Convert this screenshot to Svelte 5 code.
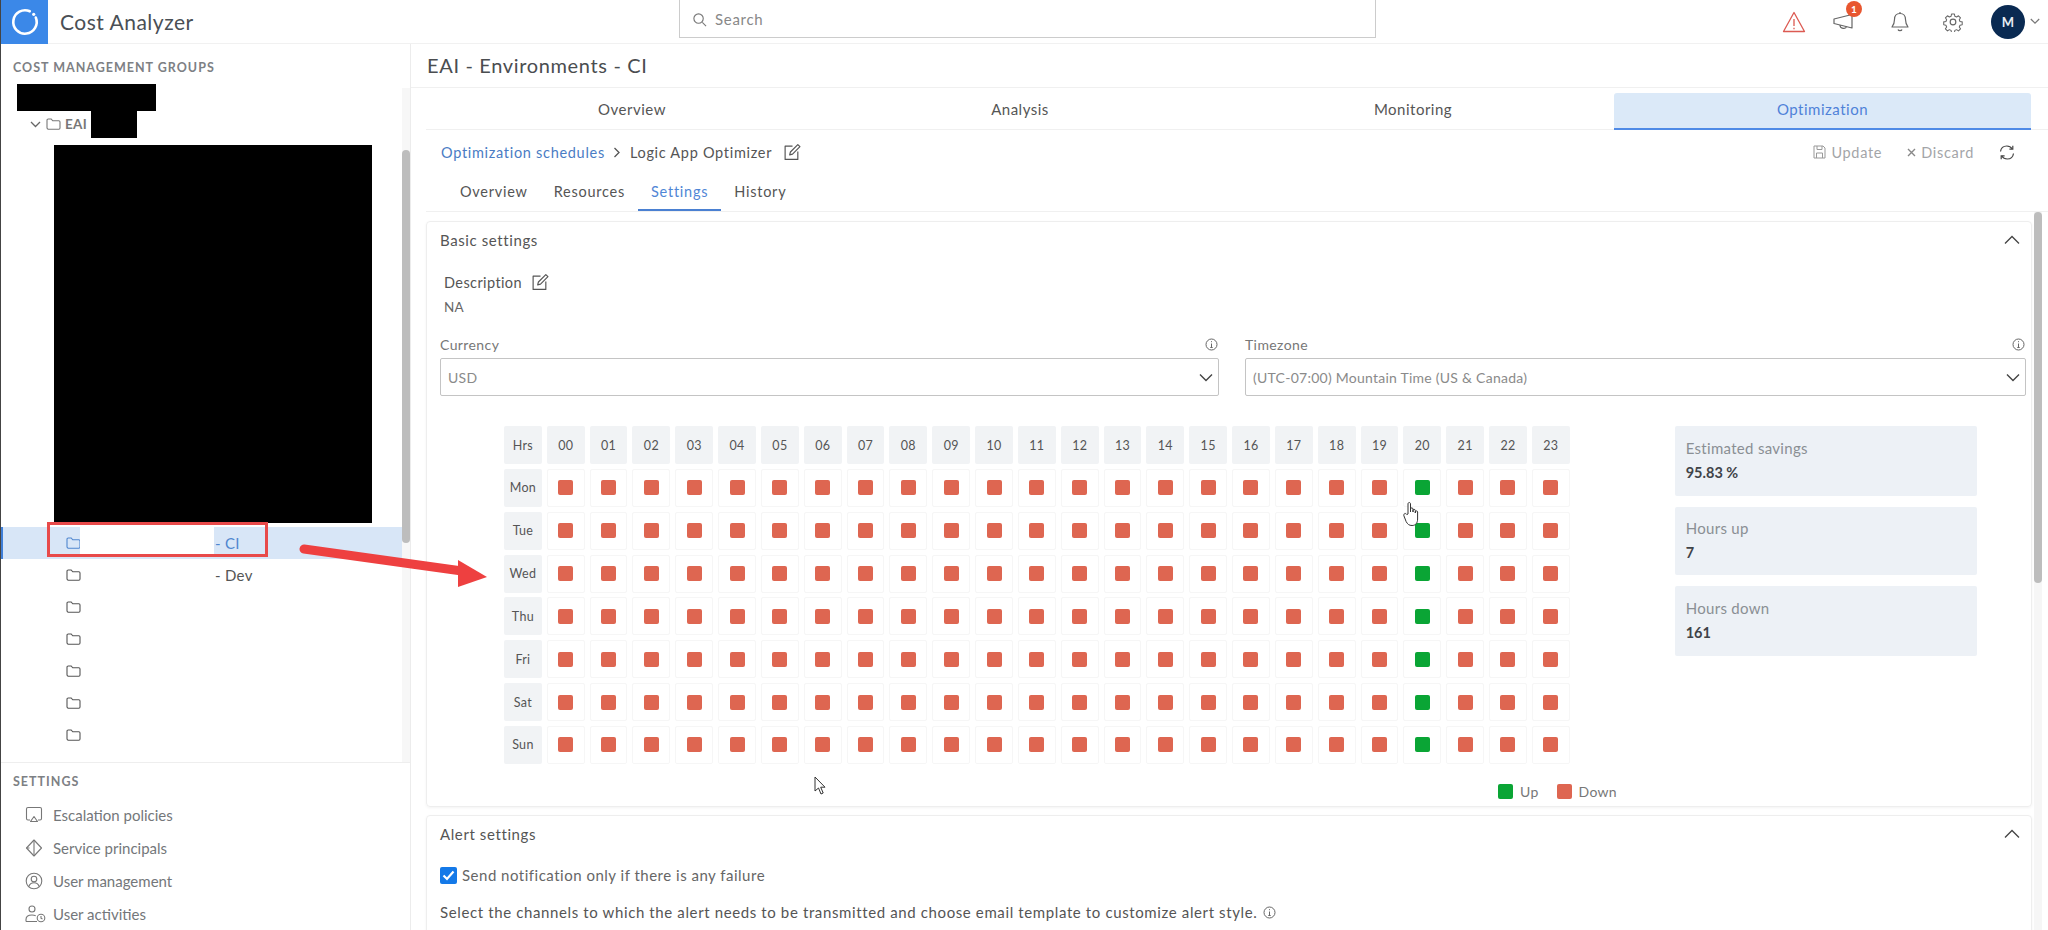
<script>
	const topTabs = ['Overview', 'Analysis', 'Monitoring', 'Optimization']
	const subTabs = ['Overview', 'Resources', 'Settings', 'History']
	const days = ['Mon', 'Tue', 'Wed', 'Thu', 'Fri', 'Sat', 'Sun']
	const hours = Array.from({ length: 24 }, (_, i) => String(i).padStart(2, '0'))
	const stats = [
		{ label: 'Estimated savings', value: '95.83 %', cls: 'first' },
		{ label: 'Hours up', value: '7', cls: 'second' },
		{ label: 'Hours down', value: '161', cls: 'third' }
	]
	const folders = ['- Dev', '', '', '', '', '']
</script>

<div class="app">
	<header class="topbar">
		<div class="logo">
			<svg width="30" height="30" viewBox="0 0 30 30" fill="none">
				<path d="M25.800 10.500A11.700 11.700 0 1 1 19.800 4.300" stroke="#fff" stroke-width="2.600" stroke-linecap="round" />
				<circle cx="23.700" cy="7.300" r="1.600" fill="#fff" />
			</svg>
		</div>
		<div class="product">Cost Analyzer</div>
		<div class="search">
			<svg width="15" height="15" viewBox="0 0 16 16" fill="none" stroke="#777" stroke-width="1.200">
				<circle cx="7" cy="7" r="5" />
				<path d="M11 11l4 4" />
			</svg>
			<span>Search</span>
		</div>
		<div class="actions">
			<svg class="warn" width="24" height="22" viewBox="0 0 24 22" fill="none" stroke="#dc5a52" stroke-width="1.300" stroke-linejoin="round">
				<path d="M12 1.500L22.500 20.500H1.500z" />
				<path d="M12 8v7M12 16.800v1.400" />
			</svg>
			<div class="megaphone">
				<svg width="24" height="18" viewBox="0 0 24 18" fill="none" stroke="#666" stroke-width="1.200" stroke-linejoin="round">
					<path d="M2 6l18-4.500v13.500L2 10.500z" />
					<path d="M8 12c0 4 6 4.500 6.500 1.500" />
				</svg>
				<span class="badge">1</span>
			</div>
			<svg class="bell" width="18" height="22" viewBox="0 0 18 22" fill="none" stroke="#666" stroke-width="1.200" stroke-linejoin="round">
				<path d="M9 2.500c-3.500 0-5.500 2.500-5.500 6 0 4-1 5.500-2.500 7.500h16c-1.500-2-2.500-3.500-2.500-7.500 0-3.500-2-6-5.500-6z" />
				<path d="M7 18.500c.5 1.600 3.500 1.600 4 0M9 1v1.500" />
			</svg>
			<svg class="gear" width="20" height="20" viewBox="0 0 24 24" fill="none" stroke="#666" stroke-width="1.400" stroke-linejoin="round">
				<circle cx="12" cy="12" r="3.400" />
				<path d="M10 1.500h4l.6 3 2.300 1 2.600-1.700 2.800 2.800-1.700 2.600 1 2.300 3 .6v4l-3 .6-1 2.300 1.700 2.600-2.800 2.800-2.600-1.700-2.300 1-.6 3h-4l-.6-3-2.300-1-2.600 1.700-2.800-2.800 1.700-2.600-1-2.300-3-.6v-4l3-.6 1-2.300-1.700-2.600 2.800-2.800 2.600 1.700 2.300-1z" transform="translate(1.400 1.200) scale(.88)" />
			</svg>
			<div class="avatar">M</div>
			<svg class="caret" width="10" height="7" viewBox="0 0 10 7" fill="none" stroke="#777" stroke-width="1.200"><path d="M.8 1l4.200 4.200L9.200 1" /></svg>
		</div>
	</header>

	<div class="body">
		<aside class="sidebar">
			<div class="group-title">COST MANAGEMENT GROUPS</div>
			<div class="tree-wrap">
				<div class="tree">
					<div class="tree-row eai">
						<svg width="11" height="7" viewBox="0 0 11 7" fill="none" stroke="#666" stroke-width="1.300"><path d="M1 1l4.500 4.500L10 1" /></svg>
						<svg class="folder" width="15" height="12" viewBox="0 0 15 12" fill="none" stroke="#777" stroke-width="1.100"><path d="M1 2.200c0-.7.500-1.200 1.200-1.200h3l1.500 1.800h6.100c.7 0 1.200.500 1.200 1.200v6.100c0 .7-.5 1.200-1.200 1.200H2.200C1.500 11 1 10.500 1 9.800z" /></svg>
						<span>EAI</span>
					</div>
					<div class="hidden-rows"></div>
					<div class="tree-row folder-row selected">
						<svg class="folder" width="15" height="12" viewBox="0 0 15 12" fill="none" stroke="#4f86cf" stroke-width="1.100"><path d="M1 2.200c0-.7.500-1.200 1.200-1.200h3l1.500 1.800h6.100c.7 0 1.200.500 1.200 1.200v6.100c0 .7-.5 1.200-1.200 1.200H2.200C1.500 11 1 10.500 1 9.800z" /></svg>
						<span>- CI</span>
					</div>
					{#each folders as name}
						<div class="tree-row folder-row">
							<svg class="folder" width="15" height="12" viewBox="0 0 15 12" fill="none" stroke="#555" stroke-width="1.100"><path d="M1 2.200c0-.7.500-1.200 1.200-1.200h3l1.500 1.800h6.100c.7 0 1.200.500 1.200 1.200v6.100c0 .7-.5 1.200-1.200 1.200H2.200C1.500 11 1 10.500 1 9.800z" /></svg>
							<span>{name}</span>
						</div>
					{/each}
				</div>
				<div class="side-scroll"><div class="side-thumb"></div></div>
			</div>
			<div class="settings">
				<div class="group-title small">SETTINGS</div>
				<ul>
					<li>
						<svg width="18" height="18" viewBox="0 0 18 18" fill="none" stroke="#777" stroke-width="1.100" stroke-linejoin="round"><path d="M5 14H3c-1 0-1.500-.5-1.500-1.500V3C1.500 2 2 1.500 3 1.500h12c1 0 1.500.5 1.500 1.500v9.500c0 1-.5 1.500-1.500 1.500h-2" /><path d="M9 10.500l3.500 5h-7z" /></svg>
						<span>Escalation policies</span>
					</li>
					<li>
						<svg width="18" height="18" viewBox="0 0 18 18" fill="none" stroke="#777" stroke-width="1.100" stroke-linejoin="round"><path d="M9 1l7.500 8L9 17 1.500 9z" /><path d="M9 1v16M1.500 9h3" /></svg>
						<span>Service principals</span>
					</li>
					<li>
						<svg width="18" height="18" viewBox="0 0 18 18" fill="none" stroke="#777" stroke-width="1.100"><circle cx="9" cy="9" r="7.800" /><circle cx="9" cy="7" r="2.800" /><path d="M3.800 14.500c1-2.800 3-3.800 5.200-3.800s4.200 1 5.200 3.800" /></svg>
						<span>User management</span>
					</li>
					<li class="tight">
						<svg width="21" height="18" viewBox="0 0 21 18" fill="none" stroke="#777" stroke-width="1.100"><circle cx="7" cy="4" r="3" /><path d="M1 16.500v-2c0-3 2.500-4.500 6-4.500 1.500 0 2.800.3 3.800.9M1 16.500h11" /><circle cx="16" cy="13" r="3.800" /><path d="M16 11v2.200l1.500 .8" /></svg>
						<span>User activities</span>
					</li>
				</ul>
			</div>
		</aside>

		<main class="main">
			<h1>EAI - Environments - CI</h1>
			<nav class="top-tabs">
				{#each topTabs as tab, i}
					<div class="top-tab" class:active={i === 3}>{tab}</div>
				{/each}
			</nav>
			<div class="crumbs">
				<span class="link">Optimization schedules</span>
				<svg width="8" height="11" viewBox="0 0 8 11" fill="none" stroke="#555" stroke-width="1.300"><path d="M1.500 1l4.500 4.500L1.500 10" /></svg>
				<span class="current">Logic App Optimizer</span>
				<svg class="edit" width="18" height="18" viewBox="0 0 17 17" fill="none" stroke="#555" stroke-width="1.100" stroke-linejoin="round"><path d="M9 3H2v12.500h12V8" /><path d="M7 8.500l-.7 2.700 2.700-.7 7-7-2-2z" /></svg>
				<div class="crumb-actions">
					<span class="act">
						<svg width="13" height="14" viewBox="0 0 13 14" fill="none" stroke="#999" stroke-width="1"><path d="M1 1h9l2 2v10H1z" /><path d="M4 1v3.500h5V1M3.500 13V8h6v5" /></svg>
						Update
					</span>
					<span class="act">
						<svg width="9" height="9" viewBox="0 0 9 9" fill="none" stroke="#888" stroke-width="1.400"><path d="M1 1l7 7M8 1l-7 7" /></svg>
						Discard
					</span>
					<svg class="refresh" width="16" height="15" viewBox="0 0 16 15" fill="none" stroke="#444" stroke-width="1.200"><path d="M1.500 6.500C2 3 4.500 1 7.800 1c2.400 0 4.200 1 5.400 2.800M14.500 8.500C14 12 11.500 14 8.200 14c-2.400 0-4.200-1-5.400-2.800" /><path d="M13.800 .8v3.400h-3.400M2.200 14.200v-3.400h3.400" /></svg>
				</div>
			</div>
			<nav class="sub-tabs">
				{#each subTabs as tab, i}
					<div class="sub-tab" class:active={i === 2}>{tab}</div>
				{/each}
			</nav>

			<div class="scroll-area">
				<div class="cards">
					<section class="card basic">
						<div class="card-head">
							<span>Basic settings</span>
							<svg width="16" height="10" viewBox="0 0 16 10" fill="none" stroke="#444" stroke-width="1.300"><path d="M1 8.500l7-7 7 7" /></svg>
						</div>
						<div class="desc">
							<div class="desc-title">
								<span>Description</span>
								<svg width="18" height="18" viewBox="0 0 17 17" fill="none" stroke="#555" stroke-width="1.100" stroke-linejoin="round"><path d="M9 3H2v12.500h12V8" /><path d="M7 8.500l-.7 2.700 2.700-.7 7-7-2-2z" /></svg>
							</div>
							<div class="desc-value">NA</div>
						</div>
						<div class="fields">
							<div class="field">
								<div class="field-label">
									<span>Currency</span>
									<svg width="13" height="13" viewBox="0 0 13 13" fill="none" stroke="#666" stroke-width="1"><circle cx="6.500" cy="6.500" r="5.500" /><path d="M6.500 5.500v4M5.300 9.500h2.400M6.500 3.200v1" /></svg>
								</div>
								<div class="select">
									<span>USD</span>
									<svg width="14" height="9" viewBox="0 0 14 9" fill="none" stroke="#444" stroke-width="1.400"><path d="M1 1.500l6 6 6-6" /></svg>
								</div>
							</div>
							<div class="field">
								<div class="field-label">
									<span>Timezone</span>
									<svg width="13" height="13" viewBox="0 0 13 13" fill="none" stroke="#666" stroke-width="1"><circle cx="6.500" cy="6.500" r="5.500" /><path d="M6.500 5.500v4M5.300 9.500h2.400M6.500 3.200v1" /></svg>
								</div>
								<div class="select">
									<span>(UTC-07:00) Mountain Time (US &amp; Canada)</span>
									<svg width="14" height="9" viewBox="0 0 14 9" fill="none" stroke="#444" stroke-width="1.400"><path d="M1 1.500l6 6 6-6" /></svg>
								</div>
							</div>
						</div>
						<div class="schedule">
							<div class="grid">
								<div class="head-cell">Hrs</div>
								{#each hours as h}
									<div class="head-cell">{h}</div>
								{/each}
								{#each days as day}
									<div class="head-cell day">{day}</div>
									{#each hours as h}
										<div class="slot"><span class="mark" class:up={h === '20'}></span></div>
									{/each}
								{/each}
							</div>
							<div class="stats">
								{#each stats as s}
									<div class="stat {s.cls}">
										<div class="stat-label">{s.label}</div>
										<div class="stat-value">{s.value}</div>
									</div>
								{/each}
							</div>
						</div>
						<div class="legend">
							<span class="mark up big"></span><span class="legend-text">Up</span>
							<span class="mark big"></span><span class="legend-text">Down</span>
						</div>
					</section>

					<section class="card alert">
						<div class="card-head">
							<span>Alert settings</span>
							<svg width="16" height="10" viewBox="0 0 16 10" fill="none" stroke="#444" stroke-width="1.300"><path d="M1 8.500l7-7 7 7" /></svg>
						</div>
						<label class="check">
							<span class="box">
								<svg width="13" height="11" viewBox="0 0 13 11" fill="none" stroke="#fff" stroke-width="2.200"><path d="M1.500 5.500l3.500 3.500L11.500 1.500" /></svg>
							</span>
							Send notification only if there is any failure
						</label>
						<p class="channels">
							Select the channels to which the alert needs to be transmitted and choose email template to customize alert style.
							<svg width="13" height="13" viewBox="0 0 13 13" fill="none" stroke="#666" stroke-width="1"><circle cx="6.500" cy="6.500" r="5.500" /><path d="M6.500 5.500v4M5.300 9.500h2.400M6.500 3.200v1" /></svg>
						</p>
					</section>
				</div>
				<div class="main-scroll"><div class="main-thumb"></div></div>
			</div>
		</main>
	</div>

	<!-- redactions and annotations painted over the capture -->
	<div class="redact r1"></div>
	<div class="redact r2"></div>
	<div class="redact r3"></div>
	<div class="wipe"></div>
	<div class="callout"></div>
	<svg class="arrow" width="200" height="50" viewBox="0 0 200 50">
		<path d="M7 5L165 27" stroke="#ee4040" stroke-width="9" stroke-linecap="round" fill="none" />
		<path d="M161 16L190 33 161 43z" fill="#ee4040" />
	</svg>
	<svg class="hand" width="18" height="26" viewBox="0 0 18 26" fill="#fff" stroke="#333" stroke-width="1" stroke-linejoin="round">
		<path d="M5 13V3c0-2 2.500-2 2.500 0v8V8c0-1.500 2.500-1.500 2.500 0v3-1.500c0-1.500 2.300-1.500 2.300 0V12v-1c0-1.500 2.300-1.500 2.300 0v7c0 4-2 6.500-5.500 6.500-3 0-4.500-1.200-6-4L1 15c-1-2 1.500-3.500 2.800-1.500z" />
	</svg>
	<svg class="pointer" width="12" height="19" viewBox="0 0 12 19" fill="#fff" stroke="#333" stroke-width="1" stroke-linejoin="round">
		<path d="M1 1v14l3.500-3 2.500 6 2.200-1-2.500-5.800H11z" />
	</svg>
</div>

<style>
	:global(body) {
		margin: 0;
		overflow: hidden;
		background: #fff;
	}

	.app {
		position: relative;
		width: 2048px;
		height: 930px;
		overflow: hidden;
		box-sizing: border-box;
		border-left: 1px solid #444;
		font-family: Lato, 'Open Sans', sans-serif;
		color: #555;
		background: #fff;
	}

	.topbar {
		display: flex;
		align-items: center;
		height: 44px;
		border-bottom: 1px solid #f1f1f1;
		box-sizing: border-box;
	}

	.logo {
		width: 47px;
		height: 44px;
		background: #3b88e8;
		display: flex;
		align-items: center;
		justify-content: center;
		flex: none;
	}

	.product {
		margin-left: 12px;
		font-size: 21px;
		letter-spacing: 0.5px;
		color: #4a4f55;
		width: 619px;
		flex: none;
	}

	.search {
		width: 697px;
		height: 38px;
		margin-top: -6px;
		padding: 2px 0 0 12px;
		box-sizing: border-box;
		border: 1px solid #ccc;
		border-top: none;
		display: flex;
		align-items: center;
		gap: 8px;
		font-size: 15px;
		letter-spacing: 0.7px;
		color: #888;
		flex: none;
	}

	.actions {
		flex: 1;
		min-width: 0;
		display: flex;
		align-items: center;
		padding-left: 406px;
		height: 44px;
	}

	.warn,
	.bell,
	.gear,
	.caret {
		flex: none;
	}

	.megaphone {
		position: relative;
		margin-left: 26px;
		height: 18px;
		flex: none;
	}

	.badge {
		position: absolute;
		top: -12px;
		left: 14px;
		width: 16px;
		height: 16px;
		border-radius: 50%;
		background: #e8562f;
		color: #fff;
		font-size: 10px;
		font-weight: 700;
		text-align: center;
		line-height: 16px;
	}

	.bell {
		margin-left: 35px;
	}

	.gear {
		margin-left: 34px;
	}

	.avatar {
		margin-left: 28px;
		margin-right: 5px;
		width: 34px;
		height: 34px;
		border-radius: 50%;
		background: #0a2a52;
		color: #e8edf3;
		font-size: 13px;
		font-weight: 700;
		text-align: center;
		line-height: 34px;
		flex: none;
	}

	.body {
		display: flex;
		height: 886px;
	}

	.sidebar {
		width: 410px;
		flex: none;
		box-sizing: border-box;
		border-right: 1px solid #ececec;
		display: flex;
		flex-direction: column;
	}

	.group-title {
		height: 44px;
		box-sizing: border-box;
		padding: 16px 0 0 12px;
		font-size: 12.500px;
		font-weight: 700;
		letter-spacing: 1px;
		color: #7d8084;
		flex: none;
	}

	.group-title.small {
		height: auto;
		padding-top: 11px;
	}

	.tree-wrap {
		flex: 1;
		display: flex;
		min-height: 0;
	}

	.tree {
		flex: 1;
		padding-top: 20px;
		overflow: hidden;
	}

	.tree-row {
		display: flex;
		align-items: center;
		height: 32px;
		font-size: 15px;
		letter-spacing: 0.3px;
		color: #555;
	}

	.eai {
		padding-left: 29px;
		font-weight: 700;
		font-size: 13.500px;
		color: #777;
	}

	.eai .folder {
		margin: 0 4px 0 5px;
	}

	.hidden-rows {
		height: 387px;
	}

	.folder-row {
		padding-left: 65px;
	}

	.folder-row span {
		margin-left: 134px;
	}

	.folder-row.selected {
		background: #d8e6f7;
		color: #4f86cf;
		box-shadow: inset 2px 0 0 #3f7fd8;
	}

	.side-scroll {
		width: 8px;
		background: #f7f7f7;
		flex: none;
	}

	.side-thumb {
		margin-top: 62px;
		height: 393px;
		background: #bdbdbd;
		border-radius: 4px;
	}

	.settings {
		height: 168px;
		flex: none;
		border-top: 1px solid #eee;
		box-sizing: border-box;
	}

	.settings ul {
		list-style: none;
		margin: 9px 0 0;
		padding: 0 0 0 24px;
	}

	.settings li {
		display: flex;
		align-items: center;
		gap: 10px;
		height: 33px;
		font-size: 15px;
		color: #74777a;
	}

	.settings li.tight {
		gap: 7px;
	}

	.main {
		flex: 1;
		min-width: 0;
		display: flex;
		flex-direction: column;
	}

	h1 {
		margin: 0;
		height: 44px;
		box-sizing: border-box;
		padding: 9px 0 0 16px;
		font-size: 20px;
		font-weight: 400;
		letter-spacing: 0.65px;
		color: #4a4d50;
		border-bottom: 1px solid #f0f0f0;
		flex: none;
	}

	.top-tabs {
		display: grid;
		grid-template-columns: 412px 364px 412px 417px;
		margin-left: 15px;
		height: 42px;
		box-sizing: border-box;
		padding-top: 5px;
		border-bottom: 1px solid #f0f0f0;
		flex: none;
	}

	.top-tab {
		text-align: center;
		font-size: 15px;
		letter-spacing: 0.5px;
		line-height: 33px;
		color: #555;
		border-bottom: 2px solid transparent;
		margin-bottom: -1px;
	}

	.top-tab:nth-child(3) {
		padding-left: 10px;
	}

	.top-tab.active {
		background: #dbe9f8;
		color: #4f82d8;
		border-bottom-color: #4f8ae6;
		border-radius: 3px 3px 0 0;
	}

	.crumbs {
		display: flex;
		align-items: center;
		height: 42px;
		box-sizing: border-box;
		padding: 2px 0 0 30px;
		font-size: 14.500px;
		letter-spacing: 0.7px;
		flex: none;
	}

	.link {
		color: #4a7cc4;
	}

	.crumbs > svg {
		margin: 0 9px 0 8px;
	}

	.crumbs > .edit {
		margin: 0 0 0 11px;
	}

	.current {
		color: #555;
	}

	.crumb-actions {
		margin-left: auto;
		margin-right: 33px;
		display: flex;
		align-items: center;
		gap: 25px;
		color: #a3a5a8;
	}

	.act {
		display: flex;
		align-items: center;
		gap: 5px;
	}

	.sub-tabs {
		display: flex;
		height: 40px;
		margin-left: 15px;
		padding-left: 21px;
		box-sizing: border-box;
		border-bottom: 1px solid #f0f0f0;
		flex: none;
	}

	.sub-tab {
		padding: 0 13px;
		font-size: 14.500px;
		letter-spacing: 0.75px;
		line-height: 39px;
		color: #555;
		height: 39px;
		box-sizing: border-box;
		border-bottom: 2px solid transparent;
	}

	.sub-tab.active {
		color: #4f86d6;
		border-bottom-color: #4a80d2;
	}

	.scroll-area {
		flex: 1;
		min-height: 0;
		display: flex;
	}

	.cards {
		width: 1606px;
		margin-left: 15px;
		padding-top: 9px;
		flex: none;
	}

	.main-scroll {
		width: 8px;
		margin-left: 2px;
		background: #f6f6f6;
	}

	.main-thumb {
		height: 371px;
		background: #bdbdbd;
		border-radius: 4px;
	}

	.card {
		border: 1px solid #eeeeee;
		border-radius: 4px;
		box-sizing: border-box;
		box-shadow: 0 1px 3px rgba(0, 0, 0, 0.05);
		padding: 0 6px 0 13px;
	}

	.basic {
		height: 586px;
	}

	.alert {
		margin-top: 8px;
		height: 130px;
	}

	.card-head {
		display: flex;
		align-items: center;
		justify-content: space-between;
		height: 38px;
		box-sizing: border-box;
		padding: 0 5px 2px 0;
		font-size: 15px;
		letter-spacing: 0.6px;
		color: #555;
	}

	.desc {
		padding: 12px 0 0 4px;
	}

	.desc-title {
		display: flex;
		align-items: center;
		gap: 9px;
		height: 20px;
		font-size: 14.500px;
		letter-spacing: 0.4px;
	}

	.desc-value {
		margin-top: 6px;
		font-size: 13.500px;
		line-height: 18px;
		letter-spacing: 0.3px;
		color: #666;
	}

	.fields {
		display: grid;
		grid-template-columns: 779px 781px;
		column-gap: 26px;
		margin-top: 17px;
	}

	.field-label {
		display: flex;
		align-items: center;
		justify-content: space-between;
		height: 24px;
		box-sizing: border-box;
		margin-bottom: 1px;
		padding: 0 1px 2px 0;
		font-size: 14px;
		letter-spacing: 0.4px;
		color: #777;
	}

	.select {
		display: flex;
		align-items: center;
		justify-content: space-between;
		height: 38px;
		box-sizing: border-box;
		border: 1px solid #c4c4c4;
		border-radius: 2px;
		padding: 0 5px 0 7px;
		font-size: 14px;
		letter-spacing: 0.25px;
		color: #8a8a8a;
	}

	.schedule {
		display: flex;
		margin-top: 30px;
		padding-left: 64px;
	}

	.grid {
		display: grid;
		grid-template-columns: repeat(25, 37.830px);
		grid-auto-rows: 38px;
		column-gap: 5px;
		row-gap: 4.850px;
		flex: none;
	}

	.head-cell {
		background: #f1f3f5;
		border-radius: 2px;
		display: flex;
		align-items: center;
		justify-content: center;
		font-size: 12.500px;
		letter-spacing: 0.3px;
		color: #555;
	}

	.slot {
		border: 1px solid #f6f6f6;
		border-radius: 2px;
		box-sizing: border-box;
		display: flex;
		align-items: center;
		justify-content: center;
	}

	.mark {
		display: block;
		width: 15px;
		height: 15px;
		border-radius: 2px;
		background: #de6651;
	}

	.mark.up {
		background: #0aa535;
	}

	.mark.big {
		flex: none;
	}

	.stats {
		margin-left: 105px;
		width: 302px;
		flex: none;
	}

	.stat {
		background: #edf1f6;
		box-sizing: border-box;
		border-radius: 2px;
		padding: 13px 0 0 11px;
		margin-bottom: 11px;
		height: 70px;
	}

	.stat.second {
		height: 68px;
		padding-top: 12px;
	}

	.stat-label {
		font-size: 15px;
		letter-spacing: 0.3px;
		line-height: 18px;
		color: #8a8f94;
	}

	.stat-value {
		margin-top: 7px;
		font-size: 14.500px;
		line-height: 18px;
		font-weight: 700;
		color: #3f4348;
	}

	.legend {
		display: flex;
		align-items: center;
		margin: 19px 0 0 1058px;
		font-size: 14px;
		letter-spacing: 0.3px;
		color: #777;
	}

	.legend-text {
		margin: 0 18px 0 7px;
	}

	.check {
		display: flex;
		align-items: center;
		gap: 5px;
		margin-top: 12px;
		font-size: 15px;
		letter-spacing: 0.5px;
		color: #666;
	}

	.box {
		width: 17px;
		height: 17px;
		background: #1479e8;
		border-radius: 2px;
		display: flex;
		align-items: center;
		justify-content: center;
		flex: none;
	}

	.channels {
		margin: 19px 0 0;
		display: flex;
		align-items: center;
		gap: 6px;
		font-size: 15px;
		letter-spacing: 0.62px;
		color: #555;
	}

	.redact {
		position: absolute;
		background: #000;
	}

	.r1 {
		left: 16px;
		top: 84px;
		width: 139px;
		height: 27px;
	}

	.r2 {
		left: 90px;
		top: 110px;
		width: 46px;
		height: 28px;
	}

	.r3 {
		left: 53px;
		top: 145px;
		width: 318px;
		height: 378px;
	}

	.wipe {
		position: absolute;
		left: 79px;
		top: 525px;
		width: 134px;
		height: 30px;
		background: #fff;
	}

	.callout {
		position: absolute;
		left: 46px;
		top: 522px;
		width: 221px;
		height: 35px;
		box-sizing: border-box;
		border: 3px solid #e84a4a;
	}

	.arrow {
		position: absolute;
		left: 296px;
		top: 544px;
	}

	.hand {
		position: absolute;
		left: 1402px;
		top: 501px;
	}

	.pointer {
		position: absolute;
		left: 813px;
		top: 776px;
	}
</style>
